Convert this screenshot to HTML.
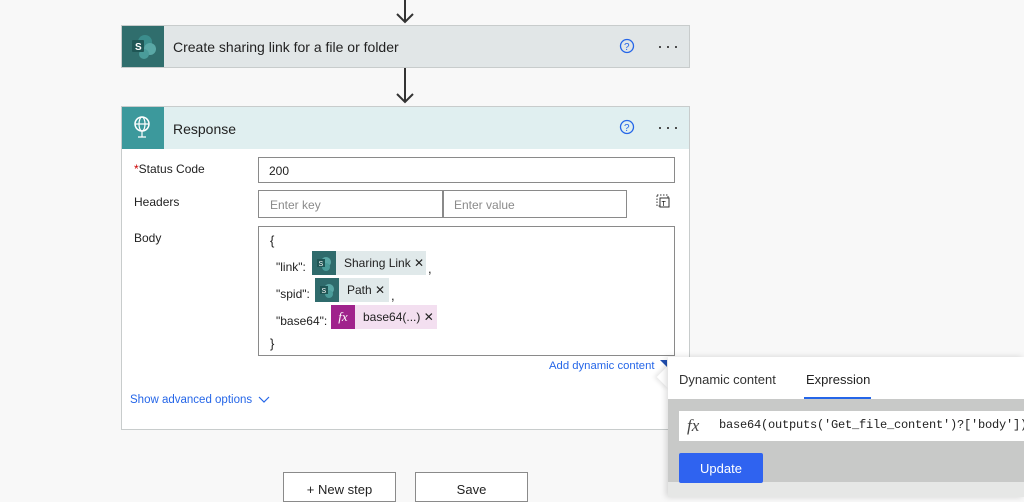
<!DOCTYPE html>
<html><head><style>
*{box-sizing:border-box;margin:0;padding:0}
body{width:1024px;height:497px;overflow:hidden;background:#f8f8f8;font-family:"Liberation Sans",sans-serif;position:relative;color:#222;font-size:13px}
.abs{position:absolute;white-space:nowrap}
.arrow{position:absolute;width:2px;background:#333}
.inp{position:absolute;background:#fff;border:1px solid #8a8a8a}
.ph{color:#8a8a8a;font-size:12px}
.tok{position:absolute;height:24px;display:flex;align-items:center;font-size:12px;white-space:nowrap}
.sp{width:24px;height:24px;background:#2f6b6c;display:flex;align-items:center;justify-content:center}
</style></head><body>
<div class="arrow" style="left:404px;top:0;height:22px"></div>
<svg class="abs" style="left:396px;top:12px" width="18" height="12"><path d="M1 2 L9 10 L17 2" stroke="#333" stroke-width="2" fill="none"/></svg>
<div class="abs" style="left:121px;top:25px;width:569px;height:43px;background:#e1e6e7;border:1px solid #c8cccc"></div>
<div class="abs" style="left:122px;top:26px;width:42px;height:41px;background:#306e6d"></div>
<svg class="abs" style="left:130px;top:33px" width="28" height="28"><circle cx="15" cy="9" r="7" fill="#3b8d8c"/><circle cx="20" cy="16" r="6" fill="#5aa8a6"/><circle cx="14" cy="21" r="5" fill="#4a9c9a"/><rect x="2" y="7" width="12" height="12" rx="1" fill="#1f5655"/><text x="5" y="17" font-size="10" fill="#fff" font-family="Liberation Sans" font-weight="bold">S</text></svg>
<div class="abs" style="left:173px;top:39px;font-size:14px">Create sharing link for a file or folder</div>
<svg class="abs" style="left:619px;top:38px" width="16" height="16"><circle cx="8" cy="8" r="6.5" stroke="#2566e8" stroke-width="1.3" fill="none"/><text x="5" y="12" font-size="10" fill="#2566e8" font-family="Liberation Sans">?</text></svg>
<div class="abs" style="left:657px;top:36px;font-size:18px;letter-spacing:2px;color:#333">···</div>
<div class="arrow" style="left:404px;top:68px;height:34px"></div>
<svg class="abs" style="left:396px;top:92px" width="18" height="12"><path d="M1 2 L9 10 L17 2" stroke="#333" stroke-width="2" fill="none"/></svg>
<div class="abs" style="left:121px;top:106px;width:569px;height:324px;background:#fff;border:1px solid #c8cccc"></div>
<div class="abs" style="left:122px;top:107px;width:567px;height:42px;background:#e0eff0"></div>
<div class="abs" style="left:122px;top:107px;width:42px;height:42px;background:#3c999c"></div>
<svg class="abs" style="left:131px;top:115px" width="24" height="26"><circle cx="11" cy="9" r="7" stroke="#fff" stroke-width="1.5" fill="none"/><ellipse cx="11" cy="9" rx="3" ry="7" stroke="#fff" stroke-width="1.2" fill="none"/><path d="M4 9H18M11 16V22M7 22H15" stroke="#fff" stroke-width="1.2"/></svg>
<div class="abs" style="left:173px;top:121px;font-size:14px">Response</div>
<svg class="abs" style="left:619px;top:119px" width="16" height="16"><circle cx="8" cy="8" r="6.5" stroke="#2566e8" stroke-width="1.3" fill="none"/><text x="5" y="12" font-size="10" fill="#2566e8" font-family="Liberation Sans">?</text></svg>
<div class="abs" style="left:657px;top:117px;font-size:18px;letter-spacing:2px;color:#333">···</div>
<div class="abs" style="left:134px;top:162px;font-size:12px"><span style="color:#c00">*</span>Status Code</div>
<div class="inp" style="left:258px;top:157px;width:417px;height:26px"><span class="abs" style="left:10px;top:6px;font-size:12px">200</span></div>
<div class="abs" style="left:134px;top:195px;font-size:12px">Headers</div>
<div class="inp" style="left:258px;top:190px;width:185px;height:28px"><span class="abs ph" style="left:11px;top:7px">Enter key</span></div>
<div class="inp" style="left:443px;top:190px;width:184px;height:28px"><span class="abs ph" style="left:10px;top:7px">Enter value</span></div>
<svg class="abs" style="left:656px;top:194px" width="14" height="14"><rect x="1" y="1" width="11" height="11" stroke="#333" stroke-dasharray="1.5 1.5" fill="none"/><rect x="4" y="4" width="9" height="9" stroke="#333" fill="#fff"/><text x="5.5" y="12" font-size="7" font-family="Liberation Sans">T</text></svg>
<div class="abs" style="left:134px;top:231px;font-size:12px">Body</div>
<div class="inp" style="left:258px;top:226px;width:417px;height:130px"></div>
<div class="abs" style="left:270px;top:233px;font-size:13px">{</div>
<div class="abs" style="left:276px;top:260px;font-size:12px">"link":</div>
<div class="tok" style="left:312px;top:251px;background:#e0e9ea;width:114px"><div class="sp"><svg width="16" height="16"><circle cx="10" cy="7" r="5" fill="#5aa8a6"/><circle cx="10" cy="12" r="4" fill="#4a9c9a"/><rect x="1" y="4" width="8" height="8" fill="#1f5655"/><text x="2.5" y="11" font-size="7" fill="#fff" font-family="Liberation Sans">S</text></svg></div><span style="margin-left:8px">Sharing Link ✕</span></div>
<div class="abs" style="left:428px;top:261px">,</div>
<div class="abs" style="left:276px;top:287px;font-size:12px">"spid":</div>
<div class="tok" style="left:315px;top:278px;background:#e0e9ea;width:74px"><div class="sp"><svg width="16" height="16"><circle cx="10" cy="7" r="5" fill="#5aa8a6"/><circle cx="10" cy="12" r="4" fill="#4a9c9a"/><rect x="1" y="4" width="8" height="8" fill="#1f5655"/><text x="2.5" y="11" font-size="7" fill="#fff" font-family="Liberation Sans">S</text></svg></div><span style="margin-left:8px">Path ✕</span></div>
<div class="abs" style="left:391px;top:288px">,</div>
<div class="abs" style="left:276px;top:314px;font-size:12px">"base64":</div>
<div class="tok" style="left:331px;top:305px;background:#f3dff0;width:106px"><div class="sp" style="background:#a0238c;color:#fff;font-family:'Liberation Serif',serif;font-style:italic;font-size:13px">fx</div><span style="margin-left:8px">base64(...) ✕</span></div>
<div class="abs" style="left:270px;top:336px;font-size:13px">}</div>
<div class="abs" style="left:549px;top:360px;width:106px;font-size:11.3px;color:#2566e8">Add dynamic content</div>
<div class="abs" style="left:660px;top:360px;width:7px;height:7px;background:#1f4eb0;clip-path:polygon(0 0,100% 0,100% 100%)"></div>
<div class="abs" style="left:130px;top:394px;font-size:11.5px;color:#2566e8">Show advanced options</div>
<svg class="abs" style="left:258px;top:396px" width="12" height="8"><path d="M1 1L6 6L11 1" stroke="#2566e8" stroke-width="1.2" fill="none"/></svg>
<div class="abs" style="left:283px;top:472px;width:113px;height:30px;background:#fff;border:1px solid #8a8a8a;text-align:center;padding-top:9px;font-size:13px">+ New step</div>
<div class="abs" style="left:415px;top:472px;width:113px;height:30px;background:#fff;border:1px solid #8a8a8a;text-align:center;padding-top:9px;font-size:13px">Save</div>
<div class="abs" style="left:660px;top:369px;width:16px;height:16px;background:#fff;transform:rotate(45deg);box-shadow:-2px 2px 4px rgba(0,0,0,.1)"></div>
<div class="abs" style="left:668px;top:357px;width:356px;height:140px;background:#fff;box-shadow:-2px 0 6px rgba(0,0,0,.15)"></div>
<div class="abs" style="left:679px;top:372px;font-size:13px;color:#333">Dynamic content</div>
<div class="abs" style="left:806px;top:372px;font-size:13px;color:#222">Expression</div>
<div class="abs" style="left:804px;top:397px;width:67px;height:2px;background:#2566e8"></div>
<div class="abs" style="left:668px;top:399px;width:356px;height:83px;background:#c8c9c8"></div>
<div class="abs" style="left:668px;top:482px;width:356px;height:15px;background:#e6e7e6"></div>
<div class="abs" style="left:679px;top:411px;width:345px;height:30px;background:#fff"></div>
<div class="abs" style="left:687px;top:416px;font-family:'Liberation Serif',serif;font-style:italic;font-size:17px;color:#444">fx</div>
<div class="abs" style="left:719px;top:418px;font-family:'Liberation Mono',monospace;font-size:12px;letter-spacing:-0.2px">base64(outputs('Get_file_content')?['body'])</div>
<div class="abs" style="left:679px;top:453px;width:84px;height:30px;background:#2f63f0;color:#fff;font-size:13px;text-align:center;padding-top:8px;border-radius:2px">Update</div>
</body></html>
